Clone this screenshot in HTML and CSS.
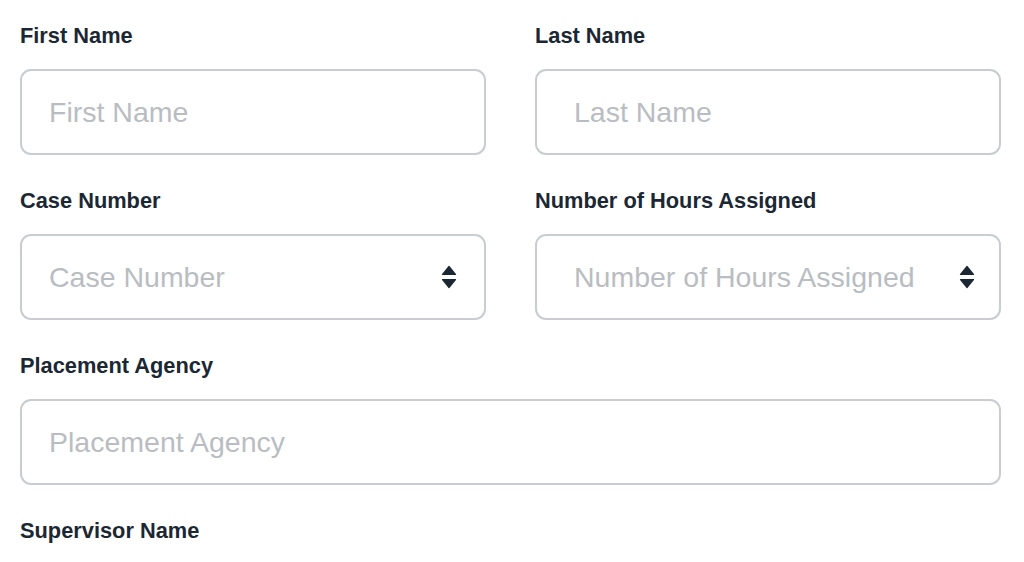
FILE: index.html
```html
<!DOCTYPE html>
<html lang="en">
<head>
    <meta charset="UTF-8">
    <meta name="viewport" content="width=device-width, initial-scale=1.0">
    <title>Assignment Form</title>
    <link rel="stylesheet" href="styles.css">
</head>
<body>
    <form class="form">
        <div class="field">
            <label class="label" for="first">First Name</label>
            <div class="box"><input id="first" class="input" placeholder="First Name"></div>
        </div>
        <div class="field right">
            <label class="label" for="last">Last Name</label>
            <div class="box"><input id="last" class="input" placeholder="Last Name"></div>
        </div>
        <div class="field">
            <label class="label" for="case">Case Number</label>
            <div class="box">
                <input id="case" class="input" placeholder="Case Number">
                <svg class="spinner" viewBox="0 0 16 24">
                    <path d="M8 1.5 L14.5 9.5 H1.5 Z" />
                    <path d="M8 22.5 L14.5 14.5 H1.5 Z" />
                </svg>
            </div>
        </div>
        <div class="field right">
            <label class="label" for="hours">Number of Hours Assigned</label>
            <div class="box">
                <input id="hours" class="input" placeholder="Number of Hours Assigned">
                <svg class="spinner" viewBox="0 0 16 24">
                    <path d="M8 1.5 L14.5 9.5 H1.5 Z" />
                    <path d="M8 22.5 L14.5 14.5 H1.5 Z" />
                </svg>
            </div>
        </div>
        <div class="field wide">
            <label class="label" for="agency">Placement Agency</label>
            <div class="box"><input id="agency" class="input" placeholder="Placement Agency"></div>
        </div>
        <div class="field wide">
            <label class="label" for="supervisor">Supervisor Name</label>
            <div class="box"><input id="supervisor" class="input" placeholder="Supervisor Name"></div>
        </div>
    </form>
</body>
</html>
```

FILE: styles.css
```css
body {
    margin: 0;
    padding: 23px 23px 0 20px;
    background: #fff;
    font-family: "Liberation Sans", Arial, sans-serif;
    overflow: hidden;
}

.form {
    display: grid;
    grid-template-columns: 466px 466px;
    column-gap: 49px;
    row-gap: 33px;
}

.field {
    display: flex;
    flex-direction: column;
    gap: 20px;
}

.wide {
    grid-column: 1 / 3;
}

.label {
    font-size: 21.8px;
    line-height: 26px;
    font-weight: bold;
    color: #1b2833;
}

.box {
    display: flex;
    align-items: center;
    height: 86px;
    box-sizing: border-box;
    border: 2.5px solid #c9cdd1;
    border-radius: 11px;
    padding: 0 27px 0 27px;
}

.right .box {
    padding: 0 24px 0 37px;
}

.input {
    flex: 1;
    min-width: 0;
    border: none;
    outline: none;
    padding: 0;
    background: transparent;
    font-family: "Liberation Sans", Arial, sans-serif;
    font-size: 28.5px;
    color: #1b2833;
}

.input::placeholder {
    color: #b9bdc2;
}

.spinner {
    width: 16px;
    height: 24px;
    margin-left: 12px;
}

.spinner path {
    fill: #1b2833;
    stroke: #1b2833;
    stroke-width: 1.2;
    stroke-linejoin: round;
}
```
